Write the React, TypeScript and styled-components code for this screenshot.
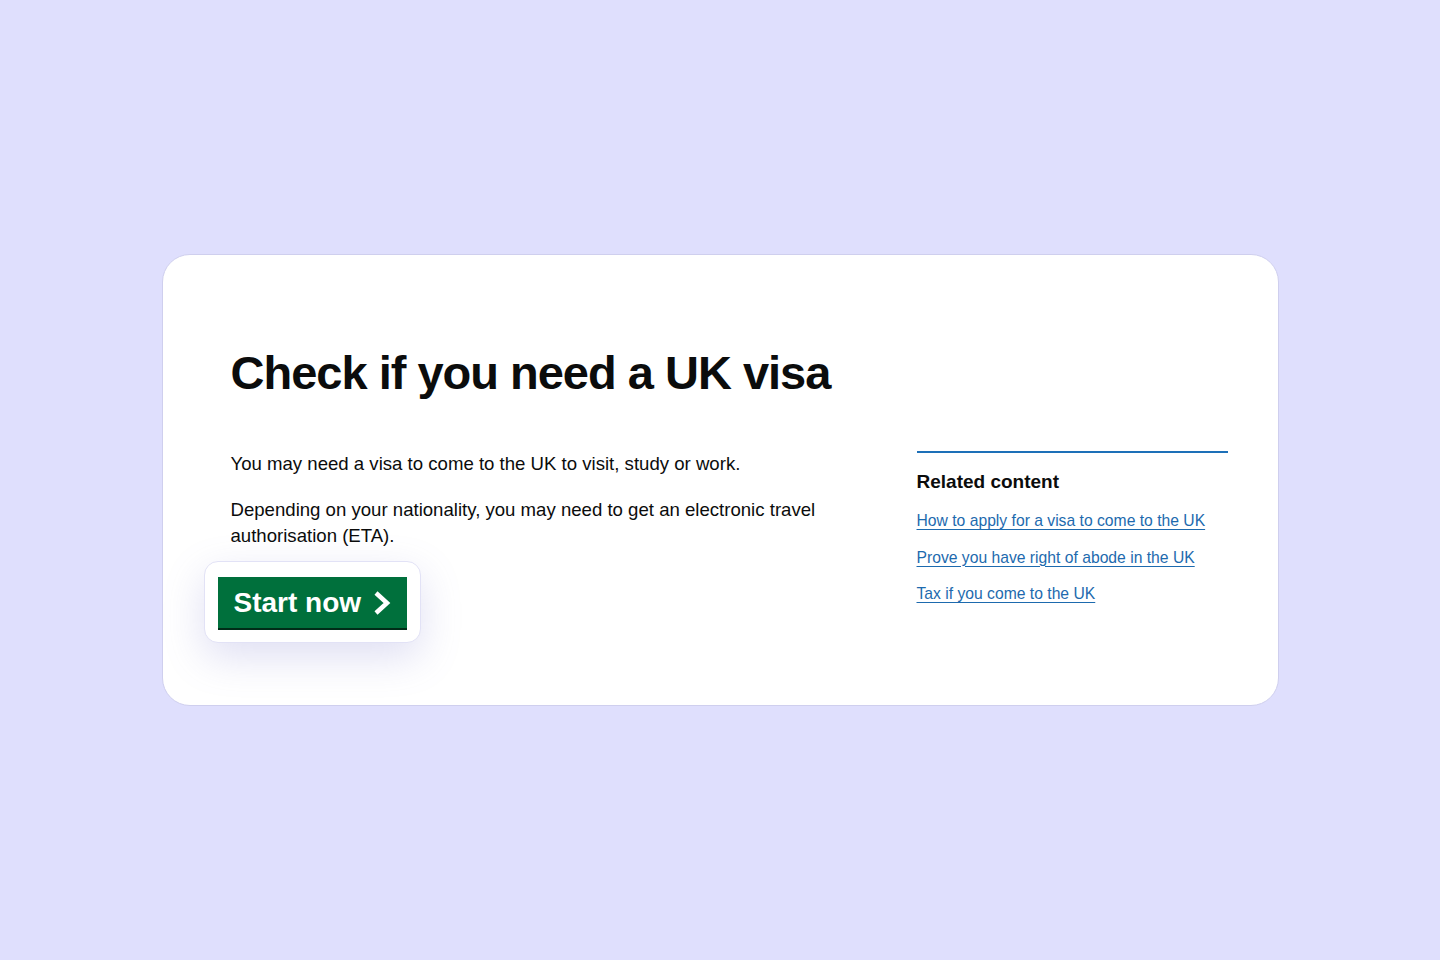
import styled, { createGlobalStyle } from 'styled-components';

const GlobalStyle = createGlobalStyle`
	html, body {
		margin: 0;
		padding: 0;
		background: #dfdffd;
	}
	body {
		font-family: "Liberation Sans", Arial, sans-serif;
		color: #0b0c0c;
	}
`;

const relatedLinks = [
	'How to apply for a visa to come to the UK',
	'Prove you have right of abode in the UK',
	'Tax if you come to the UK',
];

export default function App() {
	return (
		<>
			<GlobalStyle />
			<Page>
				<Card>
					<Heading>Check if you need a UK visa</Heading>
					<Columns>
						<MainColumn>
							<Body>You may need a visa to come to the UK to visit, study or work.</Body>
							<Body>
								Depending on your nationality, you may need to get an electronic travel
								authorisation (ETA).
							</Body>
							<Highlight>
								<StartButton>
									Start now
									<svg width="19" height="26" viewBox="0 0 19 26" aria-hidden="true">
										<path d="M3 3 L14 13 L3 23" fill="none" stroke="#fff" strokeWidth="4.5" />
									</svg>
								</StartButton>
							</Highlight>
						</MainColumn>
						<Aside>
							<AsideTitle>Related content</AsideTitle>
							<LinkList>
								{relatedLinks.map((text) => (
									<li key={text}>
										<RelatedLink href="#">{text}</RelatedLink>
									</li>
								))}
							</LinkList>
						</Aside>
					</Columns>
				</Card>
			</Page>
		</>
	);
}

const Page = styled.div`
	width: 1440px;
	height: 960px;
	display: flex;
	align-items: center;
	justify-content: center;
	box-sizing: border-box;
`;

const Card = styled.section`
	width: 1117px;
	height: 452px;
	box-sizing: border-box;
	background: #fff;
	border: 1px solid #cfcfee;
	border-radius: 28px;
	padding: 88px 50px 0 68px;
`;

const Heading = styled.h1`
	margin: 0 0 48px;
	font-size: 47px;
	line-height: 60px;
	font-weight: 700;
	letter-spacing: -1px;
`;

const Columns = styled.div`
	display: flex;
	justify-content: space-between;
`;

const MainColumn = styled.div`
	width: 620px;
`;

const Body = styled.p`
	margin: 0 0 20px;
	font-size: 18.6px;
	line-height: 26px;
`;

const Highlight = styled.div`
	display: inline-block;
	margin: -8px 0 0 -27px;
	padding: 15px 13px 14px 13px;
	background: #fff;
	border: 1px solid #e2e2f6;
	border-radius: 14px;
	box-shadow: 0 14px 40px rgba(110, 110, 200, 0.22);
`;

const StartButton = styled.button`
	display: flex;
	align-items: center;
	gap: 12px;
	height: 51px;
	padding: 0 15px 0 16px;
	border: none;
	border-radius: 0;
	background: #00703c;
	box-shadow: 0 2px 0 #002d18;
	color: #fff;
	font-family: inherit;
	font-size: 28px;
	font-weight: 700;
	cursor: pointer;
`;

const Aside = styled.aside`
	width: 311px;
	border-top: 2px solid #1d70b8;
	padding-top: 16px;
	margin-top: 0;
`;

const AsideTitle = styled.h2`
	margin: 0 0 15px;
	font-size: 19px;
	line-height: 25px;
	font-weight: 700;
`;

const LinkList = styled.ul`
	list-style: none;
	margin: 0;
	padding: 0;
	display: flex;
	flex-direction: column;
	gap: 12.5px;
`;

const RelatedLink = styled.a`
	color: #1d6aae;
	font-size: 15.7px;
	line-height: 24px;
	text-decoration: underline;
	text-underline-offset: 3px;
	text-decoration-thickness: 1px;
`;
